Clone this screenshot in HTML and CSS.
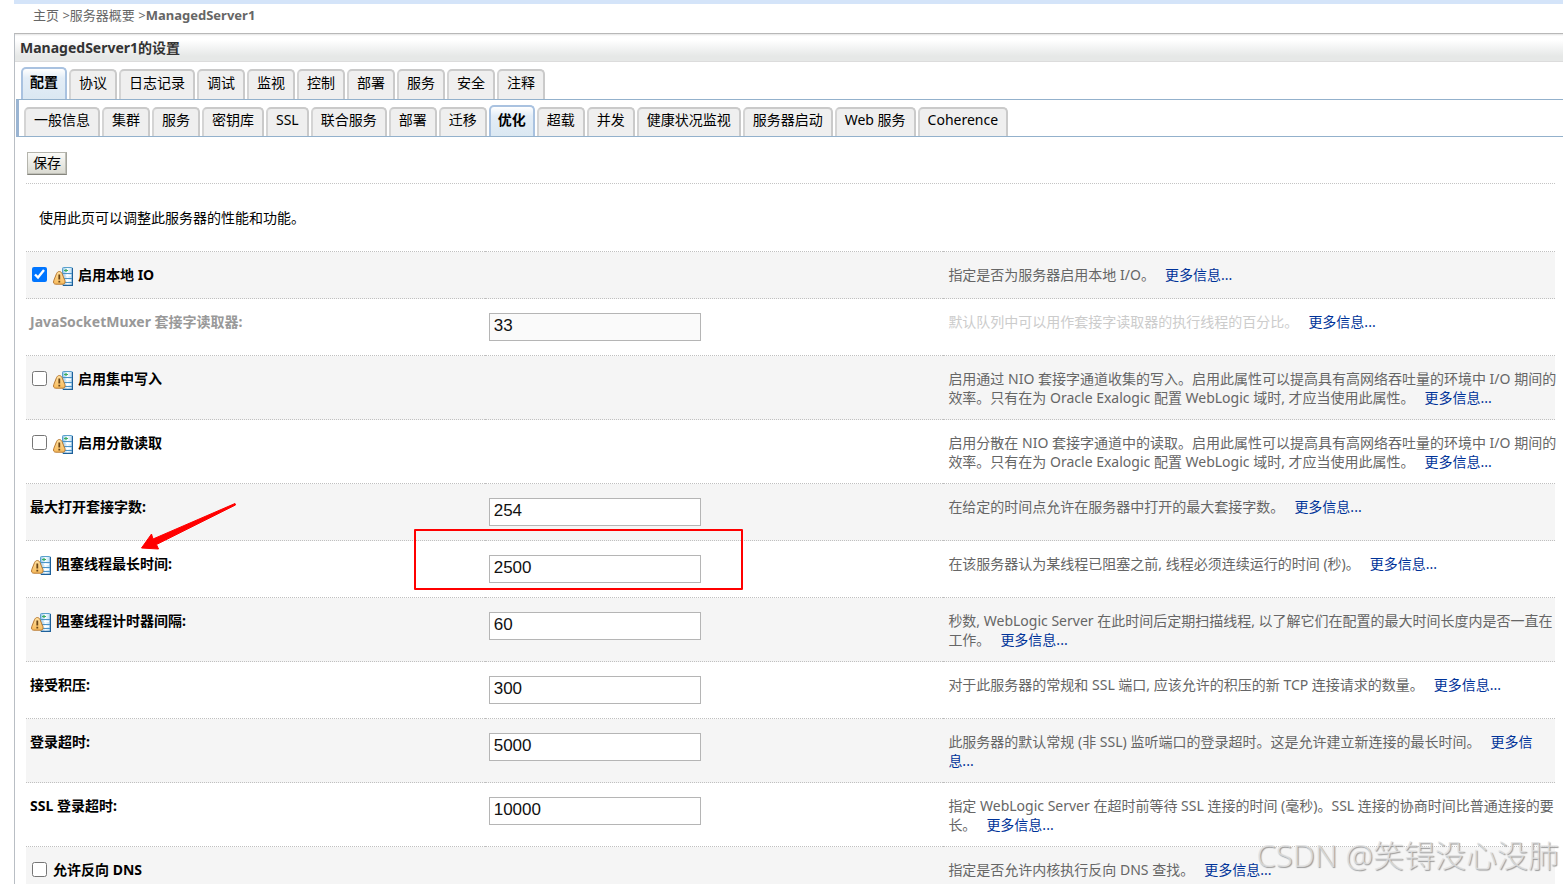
FILE: index.html
```html
<!DOCTYPE html>
<html lang="zh-CN">
<head>
<meta charset="utf-8">
<title>ManagedServer1的设置</title>
<link rel="stylesheet" href="styles.css">
</head>
<body>
<svg class="defs" aria-hidden="true">
  <defs>
    <linearGradient id="srv" x1="0" x2="1"><stop offset="0" stop-color="#8cc4e8"/><stop offset="0.5" stop-color="#f4fbff"/><stop offset="1" stop-color="#b4daf2"/></linearGradient>
    <linearGradient id="warn" x1="0" y1="0" x2="0" y2="1"><stop offset="0" stop-color="#ffe0a0"/><stop offset="1" stop-color="#f7bb5c"/></linearGradient>
  </defs>
  <symbol id="restart" viewBox="0 0 20 19">
    <rect x="9.500" y="0.5" width="10" height="18" rx="1" fill="url(#srv)" stroke="#5ba0cc"/>
    <path d="M19.400 1v17.400H10" fill="none" stroke="#1d609a" stroke-width="1.200"/>
    <path d="M10 6.500h9M10 11.500h9M10 15.500h9" stroke="#4a93c8"/>
    <path d="M13 8.500h5M13 13.500h5" stroke="#fff"/>
    <path d="M11 3.500h4M13 2v3" stroke="#3fae5e" stroke-width="1.200"/>
    <path d="M6.300 4.500c1.300 0 2.200.9 2.800 2.200l2.700 6.800c.9 2.200-.2 3.700-2 3.700H2.800c-1.900 0-2.800-1.500-2-3.700l2.700-6.800c.6-1.300 1.500-2.200 2.800-2.200z" fill="url(#warn)" stroke="#b87a34"/>
    <path d="M6.300 7.500v5M6.300 13.700v1.800" stroke="#6b4516" stroke-width="1.800"/>
  </symbol>
</svg>
<div class="page">
  <nav class="crumbs"><a href="#">主页</a> &gt;<a href="#">服务器概要</a> &gt;<strong>ManagedServer1</strong></nav>
  <main class="panel">
    <h1 class="title">ManagedServer1的设置</h1>
    <nav class="tabs">
      <a class="tab active" href="#">配置</a><a class="tab" href="#">协议</a><a class="tab" href="#">日志记录</a><a class="tab" href="#">调试</a><a class="tab" href="#">监视</a><a class="tab" href="#">控制</a><a class="tab" href="#">部署</a><a class="tab" href="#">服务</a><a class="tab" href="#">安全</a><a class="tab" href="#">注释</a>
    </nav>
    <nav class="tabs sub">
      <a class="tab" href="#">一般信息</a><a class="tab" href="#">集群</a><a class="tab" href="#">服务</a><a class="tab" href="#">密钥库</a><a class="tab" href="#">SSL</a><a class="tab" href="#">联合服务</a><a class="tab" href="#">部署</a><a class="tab" href="#">迁移</a><a class="tab active" href="#">优化</a><a class="tab" href="#">超载</a><a class="tab" href="#">并发</a><a class="tab" href="#">健康状况监视</a><a class="tab" href="#">服务器启动</a><a class="tab" href="#">Web 服务</a><a class="tab" href="#">Coherence</a>
    </nav>
    <form class="content">
      <div class="actions"><button class="save" type="button">保存</button></div>
      <p class="intro">使用此页可以调整此服务器的性能和功能。</p>
      <table class="props">
        <tr>
          <td><div class="name"><input class="check" type="checkbox" id="nio" checked><svg class="icon"><use href="#restart"/></svg><label for="nio">启用本地 IO</label></div></td>
          <td></td>
          <td class="desc">指定是否为服务器启用本地 I/O。<a class="more" href="#">更多信息...</a></td>
        </tr>
        <tr class="off">
          <td><div class="name"><label for="muxer">JavaSocketMuxer 套接字读取器:</label></div></td>
          <td><input class="field" id="muxer" type="text" value="33" readonly></td>
          <td class="desc">默认队列中可以用作套接字读取器的执行线程的百分比。<a class="more" href="#">更多信息...</a></td>
        </tr>
        <tr>
          <td><div class="name"><input class="check" type="checkbox" id="gather"><svg class="icon"><use href="#restart"/></svg><label for="gather">启用集中写入</label></div></td>
          <td></td>
          <td class="desc">启用通过 NIO 套接字通道收集的写入。启用此属性可以提高具有高网络吞吐量的环境中 I/O 期间的<br>效率。只有在为 Oracle Exalogic 配置 WebLogic 域时, 才应当使用此属性。<a class="more" href="#">更多信息...</a></td>
        </tr>
        <tr>
          <td><div class="name"><input class="check" type="checkbox" id="scatter"><svg class="icon"><use href="#restart"/></svg><label for="scatter">启用分散读取</label></div></td>
          <td></td>
          <td class="desc">启用分散在 NIO 套接字通道中的读取。启用此属性可以提高具有高网络吞吐量的环境中 I/O 期间的<br>效率。只有在为 Oracle Exalogic 配置 WebLogic 域时, 才应当使用此属性。<a class="more" href="#">更多信息...</a></td>
        </tr>
        <tr>
          <td><div class="name"><label for="sockets">最大打开套接字数:</label></div></td>
          <td><input class="field" id="sockets" type="text" value="254"></td>
          <td class="desc">在给定的时间点允许在服务器中打开的最大套接字数。<a class="more" href="#">更多信息...</a></td>
        </tr>
        <tr>
          <td><div class="name"><svg class="icon"><use href="#restart"/></svg><label for="stuck">阻塞线程最长时间:</label>
            <svg class="arrow" viewBox="0 0 96 48" aria-hidden="true"><path d="M94 1.500L12 37L10.500 32L0.500 46L17.500 47L15.500 42.500L94.500 3z" fill="#f00" stroke="#f00" stroke-width="1" stroke-linejoin="round"/></svg></div></td>
          <td><div class="marked"><input class="field" id="stuck" type="text" value="2500"><span class="frame"></span></div></td>
          <td class="desc">在该服务器认为某线程已阻塞之前, 线程必须连续运行的时间 (秒)。<a class="more" href="#">更多信息...</a></td>
        </tr>
        <tr>
          <td><div class="name"><svg class="icon"><use href="#restart"/></svg><label for="timer">阻塞线程计时器间隔:</label></div></td>
          <td><input class="field" id="timer" type="text" value="60"></td>
          <td class="desc">秒数, WebLogic Server 在此时间后定期扫描线程, 以了解它们在配置的最大时间长度内是否一直在<br>工作。<a class="more" href="#">更多信息...</a></td>
        </tr>
        <tr>
          <td><div class="name"><label for="backlog">接受积压:</label></div></td>
          <td><input class="field" id="backlog" type="text" value="300"></td>
          <td class="desc">对于此服务器的常规和 SSL 端口, 应该允许的积压的新 TCP 连接请求的数量。<a class="more" href="#">更多信息...</a></td>
        </tr>
        <tr>
          <td><div class="name"><label for="login">登录超时:</label></div></td>
          <td><input class="field" id="login" type="text" value="5000"></td>
          <td class="desc">此服务器的默认常规 (非 SSL) 监听端口的登录超时。这是允许建立新连接的最长时间。<a class="more" href="#">更多信<br>息...</a></td>
        </tr>
        <tr>
          <td><div class="name"><label for="ssl">SSL 登录超时:</label></div></td>
          <td><input class="field" id="ssl" type="text" value="10000"></td>
          <td class="desc">指定 WebLogic Server 在超时前等待 SSL 连接的时间 (毫秒)。SSL 连接的协商时间比普通连接的要<br>长。<a class="more" href="#">更多信息...</a></td>
        </tr>
        <tr>
          <td><div class="name"><input class="check" type="checkbox" id="dns"><label for="dns">允许反向 DNS</label></div></td>
          <td></td>
          <td class="desc">指定是否允许内核执行反向 DNS 查找。<a class="more" href="#">更多信息...</a></td>
        </tr>
      </table>
    </form>
  </main>
</div>
<div class="watermark">CSDN @笑锝没心没肺</div>
</body>
</html>
```

FILE: styles.css
```css
* { box-sizing: border-box; }
html, body { height: 100%; overflow: hidden; }
body {
  margin: 0;
  background: #fff;
  color: #000;
  font: 14px/19px "Noto Sans", "Noto Sans CJK SC", sans-serif;
}
a { color: inherit; text-decoration: none; }
.defs { position: absolute; width: 0; height: 0; }

.page { margin-left: 14px; border-top: 4px solid #d4e4f9; }
.crumbs { padding: 2px 0 8px 19px; font-size: 13px; color: #666; }

.panel { border-left: 1px solid #b9bec4; border-top: 1px solid #b8b8b8; }
.title {
  margin: 0;
  padding: 5px 5px 4px;
  border-bottom: 1px solid #dcdcdc;
  background: linear-gradient(#e4e4e4 0, #fff 2px, #fff 6px, #e6e8e7 22px);
  font-size: 14px;
  line-height: 18px;
  color: #333;
}

.tabs {
  display: flex;
  align-items: flex-end;
  gap: 2px;
  height: 38px;
  margin-left: 1px;
  padding-left: 5px;
  border-bottom: 1px solid #93b1cc;
}
.tabs.sub { height: 37px; border-left: 3px solid #9ab4d2; }
.tab {
  height: 30px;
  padding: 2px 8px 0;
  border: solid #cacaca;
  border-width: 2px 2px 0;
  border-left-color: #d4d4d4;
  border-radius: 5px 5px 0 0;
  background: #efefef;
  white-space: nowrap;
}
.sub .tab { height: 29px; padding-top: 1px; }
.tab.active {
  height: 32px;
  padding: 3px 7px 0;
  border-color: #a9c2e0;
  background: linear-gradient(#fff 0, #e3edf7 9px, #dbe8f2);
  font-weight: bold;
}
.sub .tab.active { height: 31px; }

.content { margin: 0; padding: 15px 8px 0 11px; }
.actions { padding: 0 1px 8px; border-bottom: 1px dotted #c4c4c4; display: flex; }
.save {
  height: 23px;
  padding: 0 5px 2px;
  border: 1px solid #b5b5ad;
  border-bottom-color: #84847c;
  border-right-color: #a3a39b;
  box-shadow: inset -1px -1px 0 #c0c0b8;
  background: linear-gradient(#fbfbf8, #d9d9d0);
  color: #000;
  font: inherit;
}
.intro { margin: 0; padding: 24px 13px 24px; }

.props { width: 100%; border-collapse: collapse; table-layout: fixed; }
.props tr { height: 47px; border-top: 1px dotted #c0c0c0; }
.props tr:nth-child(odd) { background: #f5f5f5; }
.props td { width: 30%; padding: 13px 0 12px 4px; vertical-align: top; }
.props .desc { width: 40%; padding-left: 5px; color: #666; white-space: nowrap; }
.off label { color: #999; }
.props .off .desc { color: #ccc; }
.props .more { margin-left: 10px; color: #039; }

.name { position: relative; display: flex; font-weight: bold; }
.check { flex: none; width: 15px; height: 15px; margin: 2px 6px 0 2px; accent-color: #0075ff; }
.icon { flex: none; width: 20px; height: 19px; margin: 2px 5px 0 0; }
.icon:first-child { margin-left: 1px; }
.field {
  display: block;
  width: 212px;
  height: 28px;
  margin: 1px 0 2px;
  padding: 0 4px 2px;
  border: 1px solid #b5b5b5;
  background: #fff;
  color: #111;
  font: 17px "Liberation Sans", Arial, sans-serif;
}
.off .field { background: #fafafa; }

.marked { position: relative; }
.frame { position: absolute; left: -75px; top: -26px; width: 329px; height: 61px; border: 2px solid #f00; border-radius: 1px; pointer-events: none; }
.arrow { position: absolute; left: 111px; top: -52px; width: 96px; height: 48px; }

.watermark {
  position: absolute;
  right: 4px;
  bottom: 8px;
  font-size: 31px;
  font-weight: 300;
  line-height: 42px;
  color: rgba(225, 225, 225, 0.8);
  text-shadow: 1px 1px 1px #999;
  white-space: nowrap;
  pointer-events: none;
}
```
